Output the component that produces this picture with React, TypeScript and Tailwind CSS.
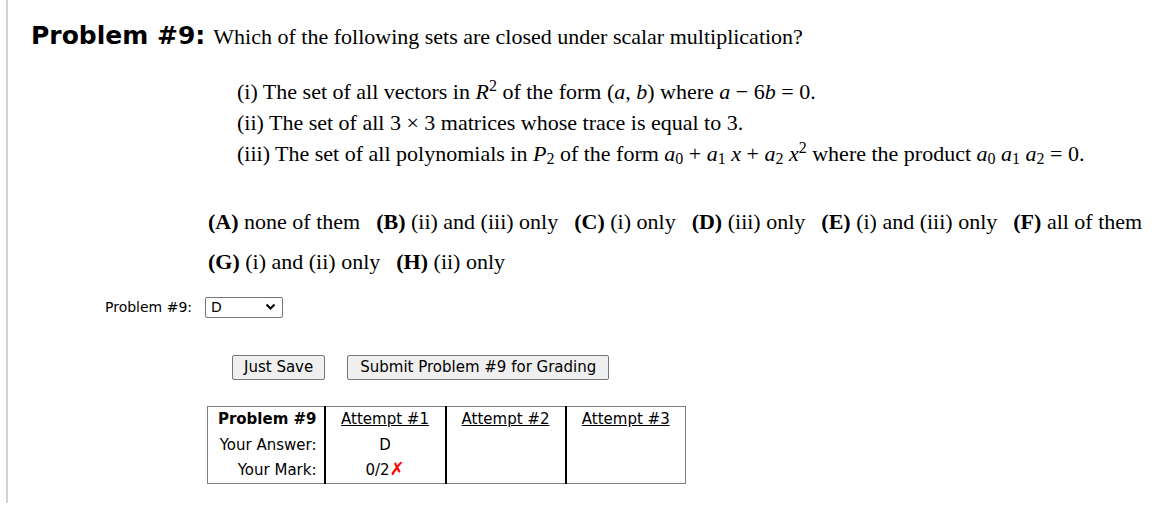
const serif = "font-['Liberation_Serif','Times_New_Roman',serif]"
const sans = "font-['DejaVu_Sans','Verdana',sans-serif]"

function M({ children }: { children: React.ReactNode }) {
  return <i className="italic">{children}</i>
}

function Sub({ children }: { children: React.ReactNode }) {
  return <sub className="text-[16px] relative top-[3px]">{children}</sub>
}

export default function App() {
  return (
    <div className="w-[1160px] h-[505px] bg-white overflow-hidden">
      <div className="ml-[6px] h-[503px] border-l-2 border-[#d3d3d3] pl-[23px] pt-[17px] text-black">
        <div className="flex items-baseline">
          <span className={`${sans} font-bold text-[25px]`}>Problem #9:</span>
          <span className={`${serif} text-[22px] ml-[8px]`}>
            Which of the following sets are closed under scalar multiplication?
          </span>
        </div>

        <div className={`${serif} text-[22px] leading-[31px] ml-[206px] mt-[21px]`}>
          <div>
            (i) The set of all vectors in <M>R</M>
            <sup className="text-[16px]">2</sup> of the form (<M>a</M>, <M>b</M>) where <M>a</M> − 6
            <M>b</M> = 0.
          </div>
          <div>(ii) The set of all 3 × 3 matrices whose trace is equal to 3.</div>
          <div>
            (iii) The set of all polynomials in <M>P</M>
            <Sub>2</Sub> of the form <M>a</M>
            <Sub>0</Sub> + <M>a</M>
            <Sub>1</Sub> <M>x</M> + <M>a</M>
            <Sub>2</Sub> <M>x</M>
            <sup className="text-[16px]">2</sup> where the product <M>a</M>
            <Sub>0</Sub> <M>a</M>
            <Sub>1</Sub> <M>a</M>
            <Sub>2</Sub> = 0.
          </div>
        </div>

        <div className={`${serif} text-[22px] leading-[40px] ml-[177px] mt-[33px] whitespace-nowrap`}>
          <div className="flex gap-[16px]">
            <span><b>(A)</b> none of them</span>
            <span><b>(B)</b> (ii) and (iii) only</span>
            <span><b>(C)</b> (i) only</span>
            <span><b>(D)</b> (iii) only</span>
            <span><b>(E)</b> (i) and (iii) only</span>
            <span><b>(F)</b> all of them</span>
          </div>
          <div className="flex gap-[16px]">
            <span><b>(G)</b> (i) and (ii) only</span>
            <span><b>(H)</b> (ii) only</span>
          </div>
        </div>

        <div className={`${sans} text-[14px] flex items-center mt-[15px] ml-[74px]`}>
          <span>Problem #9:</span>
          <div className="ml-[13px] w-[78px] h-[21px] border border-[#767676] rounded-[2px] flex items-center justify-between pl-[5px] pr-[6px]">
            <span>D</span>
            <svg width="11" height="8" viewBox="0 0 11 8" fill="none">
              <path d="M1.5 1.5 L5.5 5.5 L9.5 1.5" stroke="#000" strokeWidth="2" />
            </svg>
          </div>
        </div>

        <div className={`${sans} text-[15px] flex gap-[22px] ml-[201px] mt-[37px]`}>
          <button className="h-[25px] px-[11px] bg-[#efefef] border border-[#767676] rounded-[2px]">
            Just Save
          </button>
          <button className="h-[25px] px-[12px] bg-[#efefef] border border-[#767676] rounded-[2px]">
            Submit Problem #9 for Grading
          </button>
        </div>

        <table
          className={`${sans} text-[15px] ml-[176px] mt-[26px] border border-[#808080] border-collapse`}
        >
          <tbody>
            <tr className="h-[26px]">
              <td className="w-[117px] text-right pr-[7px] font-bold border-r-2 border-black">
                Problem #9
              </td>
              <td className="w-[121px] text-center underline border-r-2 border-black">Attempt #1</td>
              <td className="w-[120px] text-center underline border-r-2 border-black">Attempt #2</td>
              <td className="w-[120px] text-center underline">Attempt #3</td>
            </tr>
            <tr className="h-[26px]">
              <td className="text-right pr-[7px] border-r-2 border-black">Your Answer:</td>
              <td className="text-center border-r-2 border-black">D</td>
              <td className="border-r-2 border-black"></td>
              <td></td>
            </tr>
            <tr className="h-[25px]">
              <td className="text-right pr-[7px] border-r-2 border-black">Your Mark:</td>
              <td className="text-center border-r-2 border-black">
                0/2<span className="text-[#ff0000] font-bold text-[18px] leading-none">✗</span>
              </td>
              <td className="border-r-2 border-black"></td>
              <td></td>
            </tr>
          </tbody>
        </table>
      </div>
    </div>
  )
}
